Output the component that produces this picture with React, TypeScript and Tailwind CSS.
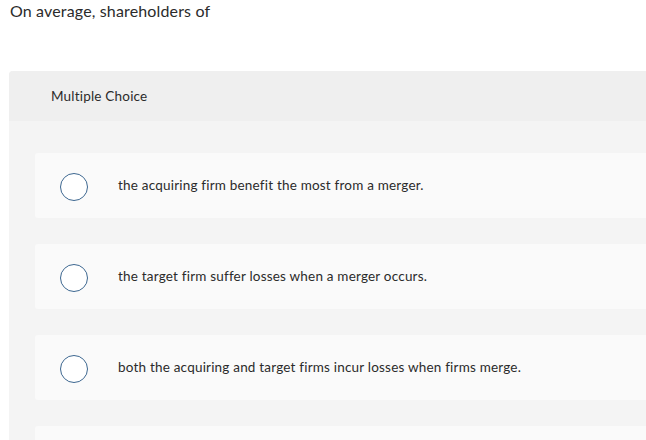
import React from 'react';

const options = [
  'the acquiring firm benefit the most from a merger.',
  'the target firm suffer losses when a merger occurs.',
  'both the acquiring and target firms incur losses when firms merge.',
  '',
];

export default function App() {
  return (
    <div
      className="w-[646px] h-[440px] overflow-hidden bg-white text-[#2b2b2b] [font-variant-ligatures:none]"
      style={{ fontFamily: 'Lato, "Open Sans", sans-serif' }}
    >
      <p className="pl-[10px] pt-[1px] text-[16px] leading-[20px] tracking-[0.15px]">On average, shareholders of</p>

      <div className="ml-[9px] mt-[50px] w-[700px] rounded-tl-[4px] bg-[#f4f4f4]">
        <div className="h-[50px] flex items-center pl-[42px] bg-[#efefef] rounded-tl-[4px]">
          <span className="text-[13.5px] tracking-[0.2px]">Multiple Choice</span>
        </div>

        <div className="flex flex-col gap-[26px] pt-[32px] pl-[26px] pb-[20px]">
          {options.map((text, i) => (
            <div key={i} className="h-[65px] flex items-center rounded-[3px] bg-[#fafafa]">
              <span className="ml-[25px] mt-[2px] w-[28px] h-[28px] rounded-full border-[1.5px] border-[#3d6790] bg-white shrink-0" />
              <span className="ml-[30px] text-[13.5px] tracking-[0.2px]">{text}</span>
            </div>
          ))}
        </div>
      </div>
    </div>
  );
}
